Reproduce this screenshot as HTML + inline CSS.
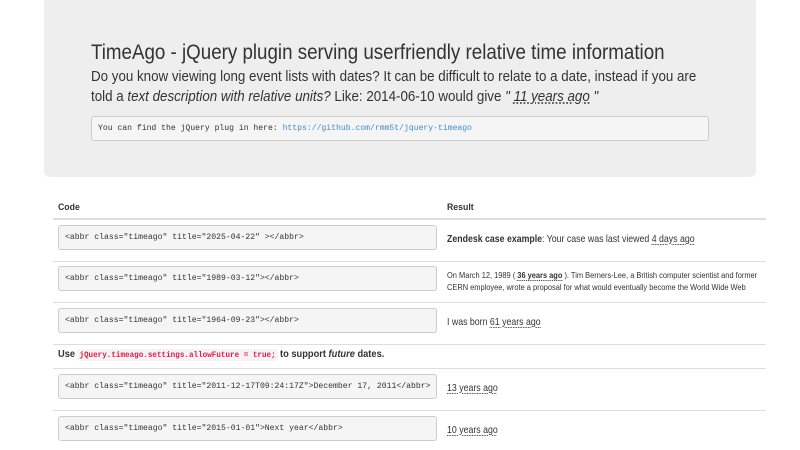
<!DOCTYPE html>
<html><head><meta charset="utf-8"><style>
*{box-sizing:border-box;margin:0;padding:0}
body{width:800px;height:450px;overflow:hidden;background:#fff;font-family:"Liberation Sans",sans-serif;color:#333;position:relative}
.jumbo{position:absolute;left:44px;top:0;width:712px;height:177px;background:#eee;border-radius:0 0 5px 5px}
h1{position:absolute;left:91px;top:41px;font-size:21px;font-weight:normal;white-space:nowrap;transform:scaleX(0.893);transform-origin:0 0}
.lead{position:absolute;left:91px;top:67px;width:700px;font-size:15px;line-height:20px;transform:scaleX(0.89);transform-origin:0 0}
abbr{text-decoration:underline dotted;text-underline-offset:2px}
.pre{font-family:"Liberation Mono",monospace;background:#f5f5f5;border:1px solid #ccc;border-radius:3px;white-space:nowrap;position:absolute;overflow:hidden}
.p1{left:91px;top:116px;width:618px;height:25px;font-size:8.1px;line-height:23px;padding-left:6px;color:#333}
.p1 a{color:#428bca;text-decoration:none}
.th{position:absolute;top:202px;font-size:9.5px;font-weight:bold;transform:scaleX(0.92);transform-origin:0 0}
.hl{position:absolute;left:53px;width:713px;height:1px;background:#ddd}
.c{left:58px;width:379px;height:25px;font-size:8.6px;line-height:23px;padding-left:6px}
.c span{display:inline-block;transform:scaleX(0.945);transform-origin:0 0}
.r{position:absolute;left:447px;font-size:10.5px;color:#333;white-space:nowrap;transform:scaleX(0.835);transform-origin:0 0}
code{font-family:"Liberation Mono",monospace;color:#c7254e;background:#f9f2f4;font-size:8.6px;padding:1px 2px;border-radius:2px}
</style></head><body>
<div class="jumbo"></div>
<h1>TimeAgo - jQuery plugin serving userfriendly relative time information</h1>
<div class="lead">Do you know viewing long event lists with dates? It can be difficult to relate to a date, instead if you are told a <i>text description with relative units?</i> Like: 2014-06-10 would give <i>" <abbr>11 years ago</abbr> "</i></div>
<div class="pre p1">You can find the jQuery plug in here: <a>https://github.com/rmm5t/jquery-timeago</a></div>

<div class="th" style="left:58px">Code</div>
<div class="th" style="left:447px">Result</div>
<div class="hl" style="top:218px;height:2px"></div>

<div class="pre c" style="top:225px"><span>&lt;abbr class="timeago" title="2025-04-22" &gt;&lt;/abbr&gt;</span></div>
<div class="r" style="top:233px"><b>Zendesk case example</b>: Your case was last viewed <abbr>4 days ago</abbr></div>
<div class="hl" style="top:261px"></div>

<div class="pre c" style="top:266px"><span>&lt;abbr class="timeago" title="1989-03-12"&gt;&lt;/abbr&gt;</span></div>
<div class="r" style="top:270px;font-size:8px;line-height:12px;transform:scaleX(0.93)">On March 12, 1989 ( <b><abbr>36 years ago</abbr></b> ). Tim Berners-Lee, a British computer scientist and former<br>CERN employee, wrote a proposal for what would eventually become the World Wide Web</div>
<div class="hl" style="top:302px"></div>

<div class="pre c" style="top:308px"><span>&lt;abbr class="timeago" title="1964-09-23"&gt;&lt;/abbr&gt;</span></div>
<div class="r" style="top:316px">I was born <abbr>61 years ago</abbr></div>
<div class="hl" style="top:344px"></div>

<div class="r" style="left:58px;top:348px;font-weight:bold;transform:scaleX(0.885)">Use <code>jQuery.timeago.settings.allowFuture = true;</code> to support <i>future</i> dates.</div>
<div class="hl" style="top:368px"></div>

<div class="pre c" style="top:374px"><span>&lt;abbr class="timeago" title="2011-12-17T09:24:17Z"&gt;December 17, 2011&lt;/abbr&gt;</span></div>
<div class="r" style="top:382px"><abbr>13 years ago</abbr></div>
<div class="hl" style="top:410px"></div>

<div class="pre c" style="top:416px"><span>&lt;abbr class="timeago" title="2015-01-01"&gt;Next year&lt;/abbr&gt;</span></div>
<div class="r" style="top:424px"><abbr>10 years ago</abbr></div>
</body></html>
